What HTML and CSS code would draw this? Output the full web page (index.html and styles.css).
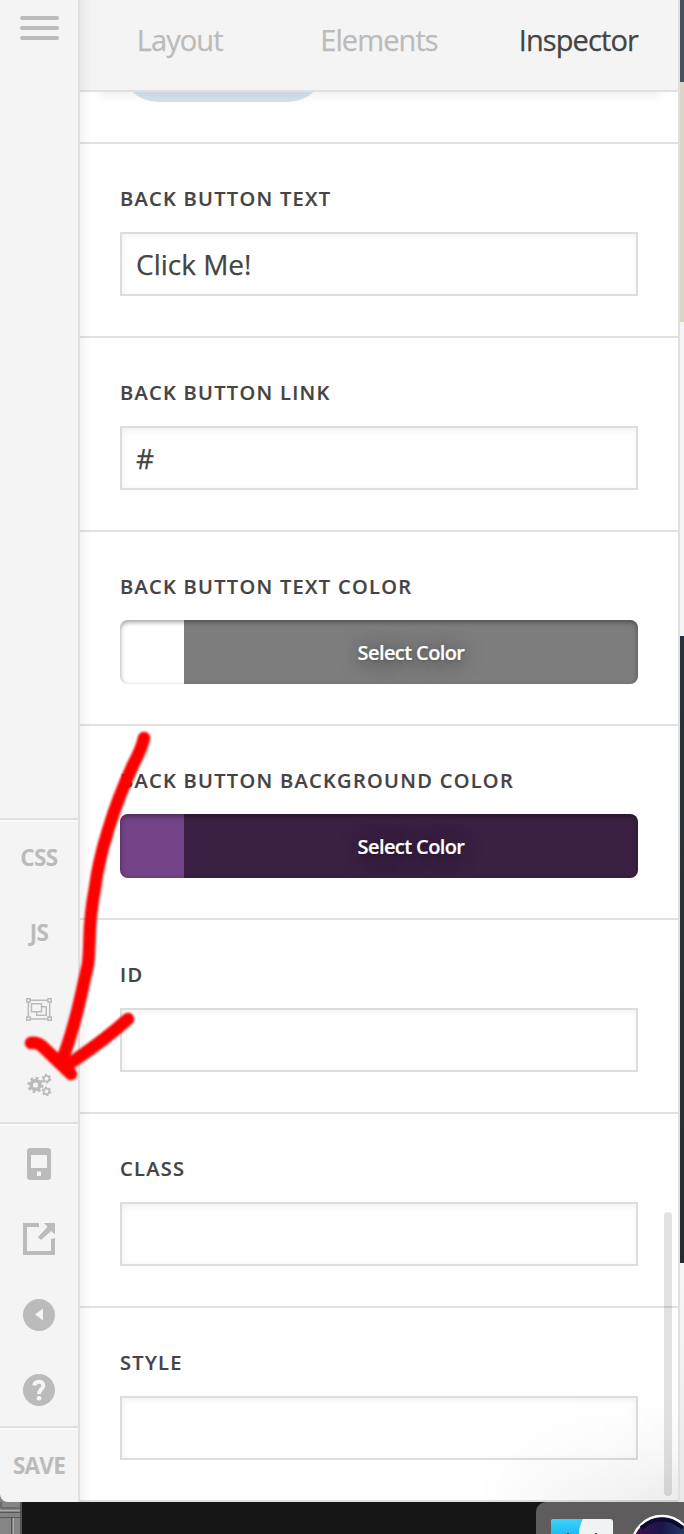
FILE: index.html
```html
<!DOCTYPE html>
<html lang="en">
<head>
<meta charset="utf-8">
<title>Inspector</title>
<link rel="stylesheet" href="styles.css">
</head>
<body>
<div class="desktop">
  <div class="app">
    <nav class="sidebar">
      <div class="menu"><i></i><i></i><i></i></div>
      <div class="group">
        <div class="item">CSS</div>
        <div class="item js">JS</div>
        <div class="item icon">
          <svg width="26" height="24" viewBox="0 0 26 24" fill="none" stroke="#bbb" stroke-width="1.5">
            <path d="M4 2.2H22M4 21H22M2.3 4V19M23.7 4V19"/>
            <path d="M.7 .7h3.4v3.4H.7zM21.9 .7h3.4v3.4h-3.4zM.7 18.9h3.4v3.4H.7zM21.9 18.9h3.4v3.4h-3.4z"/>
            <path d="M5.5 5.7h10v8h-10zM15.5 8.8h4.8v8.5h-9.6v-3.6"/>
          </svg>
        </div>
        <div class="item icon">
          <svg width="25" height="24" viewBox="0 0 25 24" fill="none" stroke="#bbb">
            <circle cx="8.500" cy="12" r="4.400" stroke-width="3.600"/>
            <circle cx="8.500" cy="12" r="7" stroke-width="2.400" stroke-dasharray="2.750 2.750"/>
            <circle cx="19.500" cy="5.700" r="2.800" stroke-width="1.700"/>
            <circle cx="19.500" cy="5.700" r="4.100" stroke-width="1.500" stroke-dasharray="2.150 2.150"/>
            <circle cx="19.500" cy="18.300" r="2.800" stroke-width="1.700"/>
            <circle cx="19.500" cy="18.300" r="4.100" stroke-width="1.500" stroke-dasharray="2.150 2.150"/>
          </svg>
        </div>
      </div>
      <div class="group tools">
        <div class="item">
          <svg width="24" height="32" viewBox="0 0 24 32"><path fill="#bbb" fill-rule="evenodd" d="M3 0H21Q24 0 24 3V29Q24 32 21 32H3Q0 32 0 29V3Q0 0 3 0ZM4 7V20H20V7ZM10 23.5V28H14V23.5Z"/></svg>
        </div>
        <div class="item">
          <svg width="32" height="32" viewBox="0 0 32 32"><path fill="#bbb" d="M0 0H16V4H4V28H28V16L32 15V32H0ZM21 0H32V11.5L28.2 8L18 17L15 14L24.500 4Z"/></svg>
        </div>
        <div class="item">
          <svg width="32" height="32" viewBox="0 0 32 32"><circle cx="16" cy="16" r="16" fill="#bbb"/><path fill="#f4f4f4" d="M20 9.500V21.500L12 15.500Z"/></svg>
        </div>
        <div class="item">
          <svg width="32" height="32" viewBox="0 0 32 32"><circle cx="16" cy="16" r="16" fill="#bbb"/><path fill="none" stroke="#f4f4f4" stroke-width="4" d="M11.300 11.500C11.800 6.500 20.300 6.500 20.300 11.500C20.300 15.500 16 15 16 20"/><circle cx="16" cy="24.300" r="2.300" fill="#f4f4f4"/></svg>
        </div>
      </div>
      <div class="save">SAVE</div>
    </nav>
    <main class="panel">
      <header class="tabs">
        <span class="tab">Layout</span>
        <span class="tab">Elements</span>
        <span class="tab active">Inspector</span>
      </header>
      <div class="previous"><div class="pill"></div></div>
      <section class="field"><label>BACK BUTTON TEXT</label><div class="input">Click Me!</div></section>
      <section class="field"><label>BACK BUTTON LINK</label><div class="input">#</div></section>
      <section class="field"><label>BACK BUTTON TEXT COLOR</label><div class="color gray"><span>Select Color</span></div></section>
      <section class="field"><label>BACK BUTTON BACKGROUND COLOR</label><div class="color purple"><span>Select Color</span></div></section>
      <section class="field"><label>ID</label><div class="input"></div></section>
      <section class="field"><label>CLASS</label><div class="input"></div></section>
      <section class="field"><label>STYLE</label><div class="input"></div></section>
      <div class="scrollbar"></div>
      <div class="dock-shadow"></div>
    </main>
    <aside class="page"><div class="slate"></div><div class="sand"></div><div class="light"></div><div class="dark"></div><div class="rest"></div></aside>
  </div>
  <footer class="below">
    <svg class="wall" width="22" height="32" viewBox="0 0 22 32"><path fill="#858585" d="M0 0H22V32H0Z"/><path fill="none" stroke="#555" d="M1 0V6H22M0 10.500H22M11.500 15V32M0 15.500H22"/><path fill="none" stroke="#aaa" d="M0 8.500H22M13.500 16V32"/><path stroke="#555" stroke-width="2" d="M21 0V32"/></svg>
    <div class="dock">
      <svg width="148" height="32" viewBox="0 0 148 32">
        <defs>
          <linearGradient id="finder" x2="0" y2="1"><stop stop-color="#3bd0fb"/><stop offset="1" stop-color="#1ebcf3"/></linearGradient>
          <linearGradient id="orb"><stop offset=".15" stop-color="#35104b"/><stop offset=".5" stop-color="#19184a"/><stop offset="1" stop-color="#24476b"/></linearGradient>
        </defs>
        <path fill="#f1f2f4" d="M15 20Q15 17 18 17H74Q77 17 77 20V32H15Z"/>
        <path fill="url(#finder)" d="M15 20Q15 17 18 17H47Q43 24 43 32H15Z"/>
        <path stroke="#31536a" stroke-width="2" d="M32 31V32M60 31V32"/>
        <circle cx="126" cy="44" r="30" fill="url(#orb)" stroke="#fff" stroke-width="2.500"/>
        <path stroke="#0d0932" stroke-width="4" fill="none" d="M105 26Q126 9 147 26"/>
      </svg>
    </div>
  </footer>
  <svg class="scribble" width="684" height="1534" viewBox="0 0 684 1534" fill="none" stroke="#f00" stroke-width="12.5" stroke-linecap="round" stroke-linejoin="round">
    <path d="M144 738Q142 748 133 765C113 808 99 855 95 888C87 929 91 940 88 964C81 996 75 1025 64 1055"/>
    <path d="M31 1043Q38 1042 43 1047L71 1074L65 1067C80 1056 99 1045 128 1019"/>
  </svg>
</div>
</body>
</html>
```
FILE: styles.css
```css
* { box-sizing: border-box; }
body { margin: 0; font-family: "Open Sans", "Noto Sans", sans-serif; color: #444; }
.desktop { position: relative; z-index: 0; width: 684px; height: 1534px; overflow: hidden; background: #161616; }
.desktop svg { display: block; }
.app { display: flex; height: 1502px; }
.sidebar { width: 80px; display: flex; flex-direction: column; background: #f4f4f4; border-right: 2px solid #e0e0e0; border-bottom-left-radius: 8px; color: #bbb; font-size: 22.5px; font-weight: 700; letter-spacing: -.6px; }
.menu { flex: 1; display: flex; flex-direction: column; gap: 6px; padding: 16px 19px 0 20px; }
.menu i { height: 4px; border-radius: 2px; background: #bbb; }
.group { height: 304px; border-top: 2px solid #e0e0e0; box-shadow: inset 0 2px #fafafa; display: flex; flex-direction: column; }
.tools { padding-top: 2px; }
.item { height: 75.5px; flex-shrink: 0; display: flex; align-items: center; justify-content: center; }
.js { padding-bottom: 2px; }
.icon { padding-top: 2px; }
.save { height: 76px; border-top: 2px solid #e0e0e0; box-shadow: inset 0 2px #fafafa; display: flex; align-items: center; justify-content: center; padding-top: 1px; letter-spacing: -.8px; }
.panel { position: relative; width: 600px; background: #fff; border-right: 2px solid #e0e0e0; }
.panel::before { content: ""; position: absolute; z-index: 2; left: 0; top: 0; bottom: 0; width: 12px; background: linear-gradient(90deg, rgba(0,0,0,.045), transparent); }
.tabs { height: 92px; position: relative; z-index: 1; display: grid; grid-template-columns: repeat(3, 1fr); background: #f4f4f4; border-bottom: 2px solid #e0e0e0; text-align: center; font-size: 29px; line-height: 80px; letter-spacing: -.9px; color: #bbb; -webkit-text-stroke: .25px currentColor; }
.tabs::after { content: ""; position: absolute; top: 92px; left: 12px; right: 10px; height: 12px; background: linear-gradient(rgba(0,0,0,.045), transparent); -webkit-mask-image: linear-gradient(90deg, transparent, #000 14px calc(100% - 14px), transparent); mask-image: linear-gradient(90deg, transparent, #000 14px calc(100% - 14px), transparent); }
.active { color: #444; }
.previous { height: 52px; border-bottom: 2px solid #e0e0e0; padding-left: 40px; overflow: hidden; }
.pill { width: 206px; height: 76px; margin-top: -66px; border-radius: 38px; background: #d5e2eb; }
.field { height: 194px; padding: 40px; border-bottom: 2px solid #e0e0e0; }
.field label { display: block; height: 28px; margin-bottom: 20px; line-height: 30px; font-size: 20px; font-weight: 600; letter-spacing: 1.31px; white-space: nowrap; -webkit-text-stroke: .2px currentColor; }
.input { height: 64px; border: 2px solid #ddd; box-shadow: inset 1px 2px 6px rgba(0,0,0,.06); padding-left: 14px; font-size: 28px; line-height: 61px; -webkit-text-stroke: .25px currentColor; }
.color { height: 64px; border-radius: 8px; padding-left: 64px; color: #fff; text-align: center; font-size: 20px; font-weight: 600; line-height: 66px; letter-spacing: -.6px; text-shadow: 0 2px 20px rgba(0,0,0,.6), 0 1px 3px rgba(0,0,0,.2); -webkit-text-stroke: .2px currentColor; }
.gray { background: linear-gradient(90deg, #fff 64px, #7d7d7d 64px); box-shadow: inset 0 2px 5px rgba(0,0,0,.4); }
.purple { background: linear-gradient(90deg, #744286 64px, #3a2143 64px); box-shadow: inset 0 2px 5px rgba(0,0,0,.4); }
.scrollbar { position: absolute; z-index: 2; right: 6px; top: 1212px; width: 8px; height: 284px; border-radius: 4px; background: rgba(0,0,0,.115); }
.dock-shadow { position: absolute; right: 0; bottom: 0; width: 200px; height: 110px; background: linear-gradient(transparent, rgba(0,0,0,.025) 50%, rgba(0,0,0,.08)); -webkit-mask-image: linear-gradient(90deg, transparent, #000); mask-image: linear-gradient(90deg, transparent, #000); }
.page { width: 4px; display: flex; flex-direction: column; }
.slate { height: 82px; background: #435160; }
.sand { height: 240px; background: #d9d7c4; }
.light { height: 314px; background: #f5f5f5; }
.dark { height: 627px; background: linear-gradient(#27323e, #2c3033 50%, #262b2f); }
.rest { flex: 1; background: linear-gradient(#f7f7f7, #e9e9e9); }
.below { height: 32px; display: flex; justify-content: space-between; }
.dock { width: 148px; height: 32px; background: #5e5c5d; border-top-left-radius: 10px; }
.wall { margin-top: -8px; padding-top: 8px; height: 40px; background: #858585; position: relative; z-index: -1; }
.scribble { position: absolute; left: 0; top: 0; z-index: 5; filter: blur(1px); }
```
